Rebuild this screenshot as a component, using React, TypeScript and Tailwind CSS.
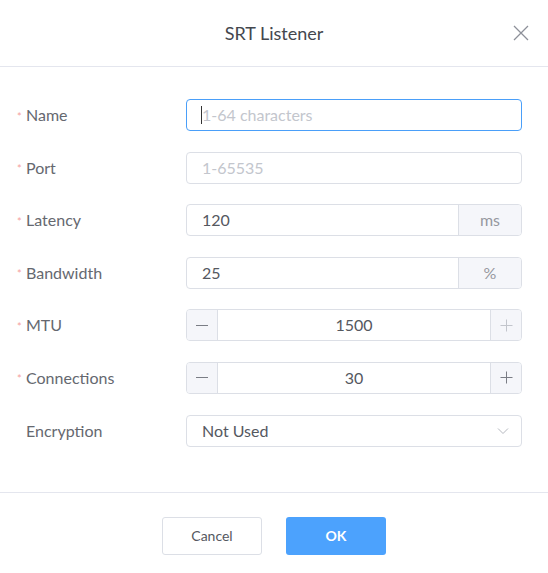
import React from "react";

const font = { fontFamily: "Lato, 'Open Sans', sans-serif" };

function Label({ text, required = true }: { text: string; required?: boolean }) {
  return (
    <div className="w-[186px] shrink-0 flex items-center pl-[17px] text-[16px] text-[#65686f]">
      <span className={`w-[9px] text-[11px] leading-none pt-[2px] ${required ? "text-[#f5a0a0]" : "text-transparent"}`}>*</span>
      <span>{text}</span>
    </div>
  );
}

function Row({ children }: { children: React.ReactNode }) {
  return <div className="flex h-8 items-stretch">{children}</div>;
}

function Stepper({ value, plusDim }: { value: string; plusDim?: boolean }) {
  return (
    <div className="flex w-[336px] border border-[#dcdfe6] rounded-[4px] overflow-hidden">
      <div className="w-[31px] bg-[#f5f6fa] border-r border-[#dcdfe6] flex items-center justify-center">
        <div className="w-[12px] h-px bg-[#7a7d85]" />
      </div>
      <div className="flex-1 flex items-center justify-center text-[16px] text-[#55585f]">{value}</div>
      <div className="w-[31px] bg-[#f5f6fa] border-l border-[#dcdfe6] flex items-center justify-center">
        <svg width="13" height="13" viewBox="0 0 13 13">
          <path d="M6.5 0.5v12M0.5 6.5h12" stroke={plusDim ? "#c2c5cc" : "#7a7d85"} strokeWidth="1" />
        </svg>
      </div>
    </div>
  );
}

function SuffixInput({ value, suffix }: { value: string; suffix: string }) {
  return (
    <div className="flex w-[336px] border border-[#dcdfe6] rounded-[4px] overflow-hidden">
      <div className="flex-1 flex items-center pl-[15px] text-[16px] text-[#55585f]">{value}</div>
      <div className="w-[63px] bg-[#f5f6fa] border-l border-[#dcdfe6] flex items-center justify-center text-[16px] text-[#95989f]">
        {suffix}
      </div>
    </div>
  );
}

export default function App() {
  return (
    <div className="w-[548px] h-[573px] bg-white flex flex-col" style={font}>
      <div className="h-[67px] shrink-0 border-b border-[#e4e6ee] relative flex items-center justify-center">
        <span className="text-[18px] text-[#44474e]">SRT Listener</span>
        <svg className="absolute left-[513px] top-[25px]" width="16" height="16" viewBox="0 0 16 16">
          <path d="M1 1L15 15M15 1L1 15" stroke="#8d9099" strokeWidth="1.3" />
        </svg>
      </div>

      <div className="flex flex-col gap-[20.6px] pt-[32px] pb-[45px]">
        <Row>
          <Label text="Name" />
          <div className="w-[336px] border border-[#4a9ff9] rounded-[4px] flex items-center pl-[15px] text-[16px] text-[#c3c6cd]">
            <span className="w-px h-[18px] bg-[#333] -ml-px" />
            <span>1-64 characters</span>
          </div>
        </Row>
        <Row>
          <Label text="Port" />
          <div className="w-[336px] border border-[#dcdfe6] rounded-[4px] flex items-center pl-[15px] text-[16px] text-[#c3c6cd]">
            1-65535
          </div>
        </Row>
        <Row>
          <Label text="Latency" />
          <SuffixInput value="120" suffix="ms" />
        </Row>
        <Row>
          <Label text="Bandwidth" />
          <SuffixInput value="25" suffix="%" />
        </Row>
        <Row>
          <Label text="MTU" />
          <Stepper value="1500" plusDim />
        </Row>
        <Row>
          <Label text="Connections" />
          <Stepper value="30" />
        </Row>
        <Row>
          <Label text="Encryption" required={false} />
          <div className="w-[336px] border border-[#dcdfe6] rounded-[4px] flex items-center justify-between pl-[15px] pr-[12px] text-[16px] text-[#55585f]">
            <span>Not Used</span>
            <svg width="12" height="8" viewBox="0 0 12 8">
              <path d="M1 1.5L6 6.5L11 1.5" fill="none" stroke="#b5b8bf" strokeWidth="1" />
            </svg>
          </div>
        </Row>
      </div>

      <div className="border-t border-[#e4e6ee] flex justify-center gap-6 pt-[24px]">
        <button className="w-[100px] h-[38px] border border-[#dcdfe6] rounded-[3px] bg-white text-[14px] text-[#55585f]">
          Cancel
        </button>
        <button className="w-[100px] h-[38px] rounded-[3px] bg-[#4ca2fd] text-[14px] text-white font-bold">
          OK
        </button>
      </div>
    </div>
  );
}
